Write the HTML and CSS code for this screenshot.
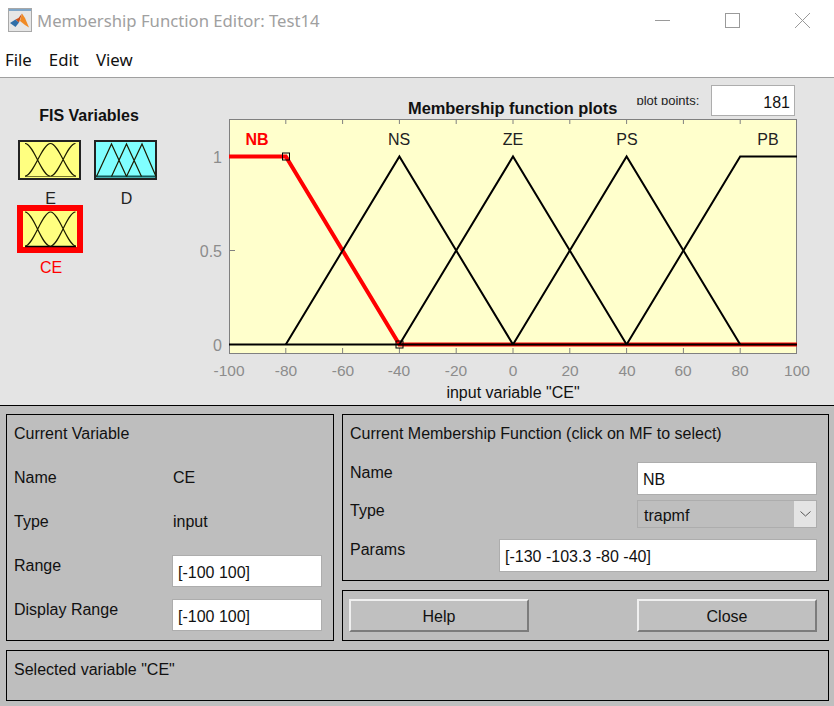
FILE: index.html
```html
<!DOCTYPE html>
<html lang="en">
<head>
<meta charset="utf-8">
<title>Membership Function Editor: Test14</title>
<link rel="stylesheet" href="styles.css">
</head>
<body>
<div class="window">
  <header class="titlebar">
    <svg class="app-icon" width="24" height="24" viewBox="0 0 24 24">
      <rect x="0.5" y="0.5" width="23" height="23" fill="#e6e6e6" stroke="#a8a8a8"/>
      <rect x="1" y="1" width="22" height="2" fill="#7fa6c8"/>
      <path d="M2 15 L7.5 11.5 L11 14.5 L7.5 19Z" fill="#2f6fa8"/>
      <path d="M7.5 11.5 L10.5 10 L14 5.5 L11 14.5Z" fill="#c8501c"/>
      <path d="M14 5.5 L17 10 L21 19.5 L17 17 L12 13 Z" fill="#f08a24"/>
    </svg>
    <span class="title-text">Membership Function Editor: Test14</span>
    <div class="win-controls">
      <svg width="15" height="15" viewBox="0 0 15 15"><path d="M0 7.5H15" class="win-glyph"/></svg>
      <svg width="15" height="15" viewBox="0 0 15 15"><rect x="0.5" y="0.5" width="14" height="14" class="win-glyph"/></svg>
      <svg width="15" height="15" viewBox="0 0 15 15"><path d="M0 0L15 15M15 0L0 15" class="win-glyph"/></svg>
    </div>
  </header>
  <nav class="menubar"><span>File</span><span>Edit</span><span>View</span></nav>

  <section class="top">
    <aside class="fis">
      <h2 class="fis-title">FIS Variables</h2>
      <div class="fis-grid">
        <div class="var">
          <svg class="tile" width="63" height="40" viewBox="0 0 63 40">
            <rect x="1" y="1" width="61" height="38" fill="#ffff80" stroke="#222" stroke-width="2"/>
            <path d="M7 36.5H58" class="base-thin"/>
            <path d="M7 3.5C15.5 3.5 23.5 36 32 36M7 36C15.5 36 24 3.5 32.5 3.5C41 3.5 49.5 36 58 36M32.5 36C41 36 49 3.5 57.5 3.5" class="curve"/>
          </svg>
          <span class="var-label">E</span>
        </div>
        <div class="var">
          <svg class="tile" width="63" height="40" viewBox="0 0 63 40">
            <rect x="1" y="1" width="61" height="38" fill="#80ffff" stroke="#222" stroke-width="2"/>
            <path d="M2 36.5H62" class="base-teal"/>
            <path d="M2.5 36.5L17.5 4L32.5 36.5M17.5 36.5L32.5 4L47.5 36.5M32.5 36.5L48 4L62 36.5" class="curve"/>
          </svg>
          <span class="var-label">D</span>
        </div>
        <div class="var var-selected">
          <svg class="tile" width="66" height="48" viewBox="0 0 66 48">
            <rect x="3" y="3" width="60" height="42" fill="#ffff80" stroke="#ff0000" stroke-width="6"/>
            <path d="M8 41.5H59" class="base-black"/>
            <path d="M8 7C16.5 7 24.5 41 33 41M8 41C16.5 41 25 7 33.5 7C42 7 50.5 41 59 41M33.5 41C42 41 50 7 58.5 7" class="curve"/>
          </svg>
          <span class="var-label">CE</span>
        </div>
      </div>
    </aside>

    <div class="plot-area">
      <div class="plot-header">
        <h2 class="plot-title">Membership function plots</h2>
        <span class="points-label">plot points:</span>
        <div class="points-field">181</div>
      </div>
      <svg class="plot" width="634" height="286" viewBox="200 119 634 286">
        <rect x="229.5" y="119.5" width="567" height="234" fill="#ffffcc" stroke="#808080"/>
        <path class="tick" d="M285.8 120v4M342.6 120v4M399.4 120v4M456.2 120v4M513 120v4M569.8 120v4M626.6 120v4M683.4 120v4M740.2 120v4M285.8 353v-5M342.6 353v-5M399.4 353v-5M456.2 353v-5M513 353v-5M569.8 353v-5M626.6 353v-5M683.4 353v-5M740.2 353v-5M230 156.5h5M230 250.5h5M230 344.5h5"/>
        <path class="mf-red" d="M229 156.5H285.8L399.4 344.5H797"/>
        <path class="mf" d="M229 344.5H797"/>
        <path class="mf" d="M285.8 344.5L399.4 156.5L513 344.5"/>
        <path class="mf" d="M399.4 344.5L513 156.5L626.6 344.5"/>
        <path class="mf" d="M513 344.5L626.6 156.5L740.2 344.5"/>
        <path class="mf" d="M626.6 344.5L740.2 156.5H797"/>
        <rect class="handle" x="282.5" y="153" width="7" height="7"/>
        <rect class="handle" x="396" y="341" width="7" height="7"/>
        <text class="mf-label mf-label-red" x="257" y="145">NB</text>
        <text class="mf-label" x="399" y="145">NS</text>
        <text class="mf-label" x="513" y="145">ZE</text>
        <text class="mf-label" x="627" y="145">PS</text>
        <text class="mf-label" x="768" y="145">PB</text>
        <text class="ylab" x="222" y="163">1</text>
        <text class="ylab" x="222" y="257">0.5</text>
        <text class="ylab" x="222" y="351">0</text>
        <text class="xlab" x="229" y="376">-100</text>
        <text class="xlab" x="286" y="376">-80</text>
        <text class="xlab" x="343" y="376">-60</text>
        <text class="xlab" x="399" y="376">-40</text>
        <text class="xlab" x="456" y="376">-20</text>
        <text class="xlab" x="513" y="376">0</text>
        <text class="xlab" x="570" y="376">20</text>
        <text class="xlab" x="627" y="376">40</text>
        <text class="xlab" x="683" y="376">60</text>
        <text class="xlab" x="740" y="376">80</text>
        <text class="xlab" x="797" y="376">100</text>
        <text class="axis-name" x="513" y="398">input variable "CE"</text>
      </svg>
    </div>
  </section>

  <section class="bottom">
    <div class="panel panel-var">
      <div class="panel-title">Current Variable</div>
      <div class="var-form">
        <span>Name</span><span class="value">CE</span>
        <span>Type</span><span class="value">input</span>
        <span>Range</span><div class="field">[-100 100]</div>
        <span>Display Range</span><div class="field">[-100 100]</div>
      </div>
    </div>
    <div class="panel panel-mf">
      <div class="panel-title">Current Membership Function (click on MF to select)</div>
      <div class="mf-row mf-row-name">
        <span>Name</span><div class="field field-short">NB</div>
      </div>
      <div class="mf-row mf-row-type">
        <span>Type</span>
        <div class="select">
          <span class="select-text">trapmf</span>
          <span class="select-arrow">
            <svg width="11" height="6" viewBox="0 0 11 6"><path d="M0.5 0.5L5.5 5L10.5 0.5" class="chevron"/></svg>
          </span>
        </div>
      </div>
      <div class="mf-row mf-row-params">
        <span>Params</span><div class="field field-long">[-130 -103.3 -80 -40]</div>
      </div>
    </div>
    <div class="panel panel-buttons">
      <button class="btn" type="button">Help</button>
      <button class="btn" type="button">Close</button>
    </div>
    <div class="panel panel-status">Selected variable "CE"</div>
  </section>
</div>
</body>
</html>
```
FILE: styles.css
```css
* { box-sizing: border-box; }
html, body { margin: 0; padding: 0; }
body { width: 834px; height: 706px; overflow: hidden; font-family: "Liberation Sans", Arial, sans-serif; font-size: 16px; line-height: 22px; color: #111; background: #fff; }
.window { width: 834px; height: 706px; display: flex; flex-direction: column; }

.titlebar { height: 44px; flex: none; display: flex; align-items: center; padding-left: 8px; background: #fff; }
.app-icon { flex: none; margin: 0 5px 4px 0; }
.title-text { margin-bottom: 3px; font-family: "Noto Sans", "Open Sans", sans-serif; font-size: 16.7px; color: #a0a0a0; white-space: nowrap; }
.win-controls { margin: 0 0 4px auto; display: flex; gap: 55px; padding-right: 24px; }
.win-controls svg { display: block; }
.win-glyph { fill: none; stroke: #9a9a9a; stroke-width: 1; }

.menubar { height: 34px; flex: none; display: flex; gap: 17px; padding: 5px 0 0 5px; background: #fff; border-bottom: 1px solid #a0a0a0; font-family: "Noto Sans", "Open Sans", sans-serif; font-size: 16.8px; color: #111; }

.top { height: 328px; flex: none; display: flex; background: #e4e4e4; border-bottom: 1px solid #000; }
.fis { width: 200px; flex: none; padding: 27px 0 0 18px; }
.fis-title { margin: 0 0 13px; width: 142px; text-align: center; font-size: 16px; line-height: 22px; font-weight: 700; color: #111; white-space: nowrap; }
.fis-grid { display: grid; grid-template-columns: 76px 76px; grid-template-rows: 65px auto; }
.var { display: flex; flex-direction: column; align-items: flex-start; }
.tile { display: block; flex: none; }
.var-label { width: 63px; padding-left: 2px; margin-top: 11px; line-height: 16px; text-align: center; color: #222; }
.var-selected { margin-left: -1px; }
.var-selected .var-label { width: 66px; margin-top: 7px; color: #ff0000; }
.curve { fill: none; stroke: #1c1c00; stroke-width: 1.2; }
.base-thin { fill: none; stroke: #77772a; stroke-width: 1; }
.base-teal { fill: none; stroke: #115a5a; stroke-width: 2; }
.base-black { fill: none; stroke: #000; stroke-width: 1.4; }

.plot-area { flex: 1; display: flex; flex-direction: column; }
.plot-header { height: 41px; flex: none; display: flex; align-items: flex-start; padding: 7px 39px 0 208px; }
.plot-title { margin: 12px 0 0; font-size: 16.4px; line-height: 22px; font-weight: 700; color: #111; white-space: nowrap; }
.points-label { margin: 8px 0 0 19px; height: 12px; overflow: hidden; font-size: 13px; line-height: 16px; color: #222; white-space: nowrap; }
.points-field { margin-left: auto; width: 84px; height: 31px; padding: 6px 4px 0 0; background: #fff; border: 1px solid #adadad; text-align: right; color: #111; }
.plot { display: block; flex: none; }
.tick { fill: none; stroke: #808080; stroke-width: 1; }
.mf { fill: none; stroke: #000; stroke-width: 2; }
.mf-red { fill: none; stroke: #ff0000; stroke-width: 4; }
.handle { fill: none; stroke: #000; stroke-width: 1; }
.mf-label { font-size: 16px; fill: #222; text-anchor: middle; }
.mf-label-red { fill: #ff0000; font-weight: 700; }
.ylab { font-size: 16px; fill: #8c8c8c; text-anchor: end; }
.xlab { font-size: 15.5px; fill: #8c8c8c; text-anchor: middle; }
.axis-name { font-size: 16px; fill: #111; text-anchor: middle; }

.bottom { flex: 1; display: grid; grid-template-columns: 328px 487px; grid-template-rows: 167px 51px 51px; gap: 9px 8px; padding: 8px 0 0 6px; background: #bebebe; }
.panel { border: 1px solid #000; padding: 8px 7px; }
.panel-var { grid-column: 1; grid-row: 1 / 3; }
.panel-mf { grid-column: 2; grid-row: 1; }
.panel-buttons { grid-column: 2; grid-row: 2; display: flex; justify-content: space-between; padding: 8px 11px 0 6px; }
.panel-status { grid-column: 1 / 3; grid-row: 3; }
.panel-title { height: 20px; }
.var-form { margin-top: 24px; display: grid; grid-template-columns: 158px 150px; grid-auto-rows: 32px; row-gap: 12px; }
.value { padding-left: 1px; }
.field { height: 32px; padding: 6px 0 0 5px; background: #fff; border: 1px solid #adadad; color: #111; white-space: nowrap; }
.mf-row { display: flex; justify-content: space-between; align-items: flex-start; padding-right: 4px; }
.mf-row-name { margin-top: 19px; }
.mf-row-type { margin-top: 5px; }
.mf-row-params { margin-top: 11px; }
.field-short { width: 180px; height: 33px; }
.field-long { width: 318px; height: 33px; }
.select { width: 180px; height: 28px; display: flex; justify-content: space-between; background: #bebebe; border: 1px solid #adadad; }
.select-text { padding: 4px 0 0 6px; color: #111; }
.select-arrow { width: 22px; display: flex; align-items: center; justify-content: center; background: #e4e4e4; }
.select-arrow svg { display: block; }
.chevron { fill: none; stroke: #555; stroke-width: 1; }
.btn { width: 180px; height: 33px; padding: 2px 0 0; font: inherit; color: #111; background: #c0c0c0; border-style: solid; border-width: 2px; border-color: #f0f0f0 #7c7c7c #7c7c7c #f0f0f0; border-radius: 0; }
```
